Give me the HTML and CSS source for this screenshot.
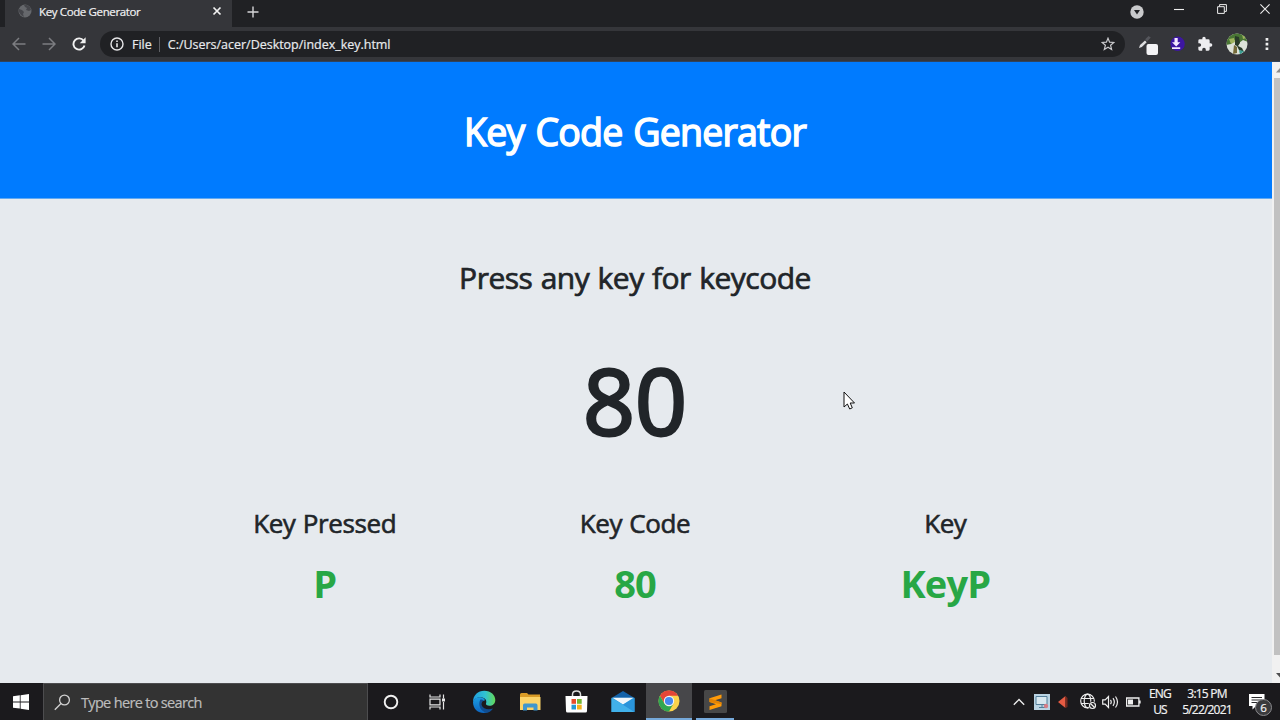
FILE: index.html
```html
<!DOCTYPE html>
<html lang="en">
<head>
    <meta charset="utf-8">
    <title>Key Code Generator</title>
    <link rel="stylesheet" href="styles.css">
</head>
<body>
    <div class="tabs">
        <div class="tab-edge"></div>
        <div class="tab">
            <svg width="14" height="14" viewBox="0 0 14 14"><circle cx="7" cy="7" r="6.5" fill="#66686c"/><path d="M1 5l3 1 2 2-1 2 1 3-3-2-2-3zM6 1l1 2 2 1-1 2 3 1 2-1-1-3-3-2z" fill="#45464b"/></svg>
            <span class="tab-title">Key Code Generator</span>
            <svg class="tab-close" width="10" height="10" viewBox="0 0 10 10"><path d="M1.5 1.5l7 7M8.5 1.5l-7 7" stroke="#f1f1f1" stroke-width="1.7"/></svg>
        </div>
        <svg class="new-tab" width="12" height="12" viewBox="0 0 12 12"><path d="M6 .5v11M.5 6h11" stroke="#d5d5d7" stroke-width="1.4"/></svg>
        <div class="window-buttons">
            <svg width="14" height="14" viewBox="0 0 14 14"><circle cx="7" cy="7" r="6.7" fill="#c9cacc"/><path d="M4 5h6L7 9.5z" fill="#202124"/></svg>
            <svg width="10" height="10" viewBox="0 0 10 10"><path d="M0 3.5h10" stroke="#eee" stroke-width="1.1"/></svg>
            <svg width="10" height="10" viewBox="0 0 10 10"><path d="M.6 2.7h6.7v6.7H.6zM2.6 2.5V.6h6.8v6.8H7.5" fill="none" stroke="#eee"/></svg>
            <svg width="10" height="10" viewBox="0 0 10 10"><path d="M.4.4l9.2 9.2M9.6.4L.4 9.6" stroke="#eee" stroke-width="1.1"/></svg>
        </div>
    </div>

    <div class="toolbar">
        <svg class="nav" width="14" height="14" viewBox="0 0 14 14"><path d="M13.5 7H1M7 1L1 7l6 6" fill="none" stroke="#7c7d81" stroke-width="1.5"/></svg>
        <svg class="nav" width="14" height="14" viewBox="0 0 14 14"><path d="M.5 7H13M7 1l6 6-6 6" fill="none" stroke="#7c7d81" stroke-width="1.5"/></svg>
        <svg class="nav" width="14" height="14" viewBox="0 0 14 14"><path d="M11.6 3.7A5.6 5.6 0 1 0 12.5 8.4" fill="none" stroke="#f1f1f1" stroke-width="1.9"/><path d="M13.6.3v6H7.8z" fill="#f1f1f1"/></svg>
        <div class="address">
            <svg width="14" height="14" viewBox="0 0 14 14"><circle cx="7" cy="7" r="6" fill="none" stroke="#e6e6e8" stroke-width="1.4"/><path d="M7 6.2v4.1M7 3.5v1.6" stroke="#e6e6e8" stroke-width="1.6"/></svg>
            <span class="scheme">File</span>
            <span class="url">C:/Users/acer/Desktop/index_key.html</span>
            <svg class="star" width="14" height="14" viewBox="0 0 14 14"><path d="M7 1.2l1.6 4 4.3.3-3.3 2.8 1 4.2L7 10.2l-3.7 2.3 1.1-4.2L1.1 5.5l4.3-.3z" fill="none" stroke="#cacacd" stroke-width="1.2"/></svg>
        </div>
        <div class="extensions">
            <svg width="22" height="22" viewBox="0 0 22 22"><path d="M2 15l1-3 5-4.500 1.700 1.700-4.800 4.900z" fill="#dedee0"/><path d="M8.200 6.300L11.500 3l2.300 1.500-3.700 4z" fill="#55565c"/><rect x="9.500" y="11" width="11.500" height="11" rx="2" fill="#f4f4f6"/></svg>
            <svg width="16" height="16" viewBox="0 0 16 16"><circle cx="8.600" cy="7.800" r="7.200" fill="#3d16a2"/><path d="M5.500 2h3.200v4.300h2.600L7.200 10.500 3 6.300h2.500zM3 11.300h8.200v1.600H3z" fill="#f5e9ff"/></svg>
            <svg width="16" height="16" viewBox="0 0 24 24"><path d="M20.500 11H19V7a2 2 0 0 0-2-2h-4V3.500a2.500 2.500 0 0 0-5 0V5H4a2 2 0 0 0-2 2v3.800h1.500a2.700 2.700 0 0 1 0 5.400H2V20a2 2 0 0 0 2 2h3.800v-1.500a2.700 2.700 0 0 1 5.400 0V22H17a2 2 0 0 0 2-2v-4h1.500a2.500 2.500 0 0 0 0-5z" fill="#eeeef1"/></svg>
            <svg width="22" height="22" viewBox="0 0 22 22"><clipPath id="face"><circle cx="11" cy="11" r="10.500"/></clipPath><g clip-path="url(#face)"><path d="M0 0h22v22H0z" fill="#dce2d8"/><path d="M0 0h22v9l-5-2-4 3-3-4-5 5-5 1z" fill="#497634"/><path d="M3 6l5-1 1 4-4 2zM16 1l4 4-3 1z" fill="#9fb45e"/><path d="M9 3l4 1 1 6-2 3 4 2 2 4-5-2-2-4-2-1z" fill="#293b29"/><path d="M8 12l3 2v6l-4 1z" fill="#756b3a"/><path d="M13 17l5 1-4 4z" fill="#3b9e94"/></g></svg>
            <svg width="4" height="14" viewBox="0 0 4 14"><path d="M.6 1h2.700v2.700H.6zM.6 5.700h2.700v2.700H.6zM.6 10.400h2.700v2.700H.6z" fill="#eee"/></svg>
        </div>
    </div>

    <div class="viewport">
        <div class="page">
            <header class="header">
                <h1>Key Code Generator</h1>
            </header>
            <main>
                <h2>Press any key for keycode</h2>
                <div class="big-code">80</div>
                <div class="results">
                    <div class="result">
                        <h3>Key Pressed</h3>
                        <p>P</p>
                    </div>
                    <div class="result">
                        <h3>Key Code</h3>
                        <p>80</p>
                    </div>
                    <div class="result">
                        <h3>Key</h3>
                        <p>KeyP</p>
                    </div>
                </div>
            </main>
        </div>
        <div class="scrollbar">
            <svg width="8" height="16" viewBox="0 0 8 16"><path d="M4 10.500l4-4.500v4.500z" fill="#8b8b8b"/></svg>
            <div class="thumb"></div>
            <svg width="8" height="16" viewBox="0 0 8 16"><path d="M4 6h4v4.500z" fill="#505050"/></svg>
        </div>
        <svg class="cursor" width="13" height="19" viewBox="0 0 13 19"><path d="M1 1v15l3.400-3 2.300 5 2.600-1.200L7.200 12h4.300z" fill="#fff" stroke="#111" stroke-width="1"/></svg>
    </div>

    <div class="taskbar">
        <div class="start">
            <svg width="16" height="16" viewBox="0 0 16 16"><path d="M0 2.300l6.800-1v6.200H0zM7.600 1.200L16 0v7.500H7.600zM0 8.400h6.800v6.200L0 13.700zM7.600 8.400H16V16l-8.400-1.200z" fill="#fff"/></svg>
        </div>
        <div class="search">
            <svg width="17" height="17" viewBox="0 0 17 17"><circle cx="10.500" cy="6" r="4.900" fill="none" stroke="#d2d2d2" stroke-width="1.300"/><path d="M7 9.500L.8 15.700" stroke="#d2d2d2" stroke-width="1.300"/></svg>
            <span>Type here to search</span>
        </div>
        <div class="apps">
            <div class="app"><svg width="16" height="16" viewBox="0 0 16 16"><circle cx="8" cy="8" r="6.300" fill="none" stroke="#f0f0f0" stroke-width="1.900"/></svg></div>
            <div class="app"><svg width="17" height="16" viewBox="0 0 17 16"><path d="M1 .5V3h10V.5M1 15.500V13h10v2.500M1 5.200h10v5.600H1zM14.500.5v4M14.500 8v7.500" fill="none" stroke="#e5e5e5" stroke-width="1.200"/><path d="M13 4.500h3v3h-3z" fill="#e5e5e5"/></svg></div>
            <div class="app">
                <svg width="24" height="24" viewBox="0 0 24 24">
                    <defs>
                        <linearGradient id="edgeTop"><stop offset="0" stop-color="#209ee0"/><stop offset=".55" stop-color="#30c3d2"/><stop offset="1" stop-color="#65d956"/></linearGradient>
                        <linearGradient id="edgeLow" x2="0" y2="1"><stop offset="0" stop-color="#1b9de2"/><stop offset="1" stop-color="#0d65c0"/></linearGradient>
                    </defs>
                    <path d="M1 12C1 5 6 .7 12.300.7 19 .7 23.300 5.200 23.300 10c0 3.700-2.600 5.800-5.800 5.800-2.500 0-4-1-3.500-2.200 1.500-4-2-6.300-5.500-6.300C5 7.300 2 9 1 12z" fill="url(#edgeTop)"/>
                    <path d="M1 12c.7-3.500 4-5 7.300-4.700 2.700.2 4.300 1.500 4.800 3-3.600.4-4.800 3.400-3.500 6.300 1.600 3.600 5.700 4.400 10.400 2.700C14 26 1 23.500 1 12z" fill="url(#edgeLow)"/>
                    <path d="M8.200 9.700c-2.500 5.500.5 12 6.800 13 2.500-.6 4.700-2.200 6-4.300-4.500 1.700-9.800.7-11.300-2.800-.8-2 0-4.200 1.800-5.300-1-.7-2.200-.9-3.300-.6z" fill="#104d91"/>
                </svg>
            </div>
            <div class="app"><svg width="21" height="18" viewBox="0 0 21 18"><path d="M0 1.500Q0 0 1.500 0H7l1.500 1.500H20v4H0z" fill="#d99b26"/><path d="M0 4h20.500v13H0z" fill="#fbd368"/><path d="M3 17.500v-5.300q0-1.600 1.600-1.600h11.300q1.600 0 1.600 1.600v5.300h-4v-3H7v3z" fill="#3f96cd"/></svg></div>
            <div class="app"><svg width="23" height="23" viewBox="0 0 23 23"><path d="M7.500 7V4.500q0-3.500 4-3.500t4 3.500V7" fill="none" stroke="#ddd" stroke-width="1.500"/><path d="M.5 6h22l-.5 15q0 1.500-1.500 1.500h-18Q1 22.500 1 21z" fill="#fff"/><path d="M6.500 9H11v4.800H6.500z" fill="#e64b2c"/><path d="M12 9h4.700v4.800H12z" fill="#73b733"/><path d="M6.500 14.700H11v4.800H6.500z" fill="#2499d6"/><path d="M12 14.700h4.700v4.800H12z" fill="#f4b21d"/></svg></div>
            <div class="app"><svg width="24" height="22" viewBox="0 0 24 22"><path d="M.5 7L12 0l11.500 7z" fill="#1362a8"/><path d="M.5 6.800h23V21H.5z" fill="#2b9de0"/><path d="M1.500 6.800h21L12 13.500z" fill="#f1f7fa"/><path d="M.5 7L17 16.500 23.500 21H.5z" fill="#41b1ea"/><path d="M23.500 7L12 13.800l11.500 7.200z" fill="#2a94da"/></svg></div>
            <div class="app active">
                <svg width="22" height="22" viewBox="0 0 22 22">
                    <circle cx="11" cy="11" r="10.500" fill="#fcd34b"/>
                    <path d="M1.900 5.750A10.500 10.500 0 0 1 20.100 5.750H11L6.450 13.600z" fill="#e44537"/>
                    <path d="M1.900 5.750A10.500 10.500 0 0 0 11 21.500l4.550-7.900L11 16.200l-4.600-2.600z" fill="#31a652"/>
                    <circle cx="11" cy="11" r="5.200" fill="#f5f5f5"/><circle cx="11" cy="11" r="4.100" fill="#4688ef"/>
                </svg>
            </div>
            <div class="app running"><svg width="23" height="23" viewBox="0 0 23 23"><rect width="23" height="23" rx="1.500" fill="#474747"/><path d="M5.500 8.200l12-3.700v3.800l-6.500 2 6.500 2.200v3.800l-12 3.700v-3.800l6.500-2-6.500-2.200z" fill="#ff9b09"/><path d="M5.500 8.200l12 4.300v1.800L5.500 12z" fill="#e38305"/></svg></div>
        </div>
        <div class="tray">
            <svg class="chevron" width="12" height="8" viewBox="0 0 12 8"><path d="M.8 6.800L6 1.500l5.200 5.300" fill="none" stroke="#eee" stroke-width="1.300"/></svg>
            <svg class="display" width="16" height="16" viewBox="0 0 16 16"><path d="M0 0h16v16H0z" fill="#b9d3e3"/><path d="M2 2.500h11v8H2zM5 13.500h6M8 10.500v3" fill="#d8e8f0" stroke="#537e99"/><circle cx="12" cy="12" r="2.200" fill="#d47d87"/></svg>
            <svg class="horn" width="10" height="14" viewBox="0 0 10 14"><path d="M0 7L7.500 1v12z" fill="#e65b43"/><path d="M7.500 1l2 2v9l-2 1z" fill="#74281f"/></svg>
            <svg class="globe" width="17" height="17" viewBox="0 0 17 17"><g fill="none" stroke="#eee" stroke-width="1.200"><circle cx="7.500" cy="8" r="6.800"/><ellipse cx="7.500" cy="8" rx="3.300" ry="6.800"/><path d="M1 5.500h13M1 10.500h13"/></g><circle cx="12.500" cy="12.500" r="4.200" fill="#1b1a1d"/><circle cx="12.500" cy="12.500" r="3" fill="none" stroke="#eee" stroke-width="1.200"/><path d="M10.500 10.500l4 4" stroke="#eee" stroke-width="1.200"/></svg>
            <svg class="sound" width="17" height="14" viewBox="0 0 17 14"><path d="M.7 4.800h2.500L6.500 1.500v11L3.200 9.200H.7zM8.500 4.800q1.500 2.200 0 4.400M11 3.200q2.700 3.800 0 7.600M13.500 1.500q4 5.500 0 11" fill="none" stroke="#eee" stroke-width="1.200"/></svg>
            <svg class="battery" width="15" height="10" viewBox="0 0 15 10"><path d="M.6 1h12.300v8H.6zM14 3.500v3" fill="none" stroke="#eee" stroke-width="1.300"/><path d="M2 2.500h5v5H2z" fill="#eee"/></svg>
            <div class="lang">ENG<br>US</div>
            <div class="clock">3:15 PM<br>5/22/2021</div>
            <div class="notices">
                <svg width="16" height="16" viewBox="0 0 16 16"><path d="M0 0h15.500v12H7l-3.500 3.500V12H0z" fill="#fff"/><path d="M2.500 3.500h10.500M2.500 6h10.500M2.500 8.500h7" stroke="#29292b" stroke-width="1.100"/></svg>
                <span class="count">6</span>
            </div>
        </div>
    </div>
</body>
</html>
```

FILE: styles.css
```css
* {
    box-sizing: border-box;
}
body {
    margin: 0;
    height: 720px;
    overflow: hidden;
    display: flex;
    flex-direction: column;
    font-family: "Open Sans", "Noto Sans", sans-serif;
    color: #212529;
}
svg {
    display: block;
    flex-shrink: 0;
}
h1, h2, h3, p {
    margin: 0;
    white-space: nowrap;
}

/* browser tabs */
.tabs {
    height: 27px;
    flex-shrink: 0;
    display: flex;
    background: #202124;
}
.tab-edge {
    width: 5px;
    background: #202124;
}
.tab {
    width: 227px;
    padding: 0 10px 5px 13px;
    display: flex;
    align-items: center;
    background: #35363a;
}
.tab-title {
    margin-left: 7px;
    font-size: 11.5px;
    letter-spacing: -0.37px;
    color: #f1f1f2;
    white-space: nowrap;
    -webkit-text-stroke: 0.2px;
}
.tab-close {
    margin-left: auto;
}
.new-tab {
    margin: 6px 0 0 15px;
}
.window-buttons {
    display: flex;
    align-items: flex-start;
    margin-left: auto;
    padding: 4px 10px 0 0;
}
.window-buttons svg + svg {
    margin-left: 33px;
}
.window-buttons svg:first-child {
    margin-top: 1px;
    margin-right: -3px;
}
.window-buttons svg:nth-child(2) {
    margin-top: 2px;
}

/* address row */
.toolbar {
    height: 35px;
    flex-shrink: 0;
    padding: 0 11px 0 12px;
    display: flex;
    align-items: center;
    background: #35363a;
    border-bottom: 1px solid #30435d;
}
.nav {
    margin-right: 16px;
}
.address {
    width: 1025px;
    height: 26px;
    margin-left: -2px;
    padding: 0 10px;
    display: flex;
    align-items: center;
    background: #202124;
    border-radius: 13px;
    color: #e8eaed;
    font-size: 12.5px;
    white-space: nowrap;
    -webkit-text-stroke: 0.2px;
}
.scheme {
    margin-left: 8px;
    padding-right: 7px;
    line-height: 15px;
    border-right: 1px solid #606166;
}
.url {
    margin-left: 8px;
    letter-spacing: -0.02px;
}
.star {
    margin-left: auto;
}
.extensions {
    flex: 1;
    display: flex;
    align-items: center;
    justify-content: space-between;
    padding-left: 12px;
}
.extensions svg:nth-child(2) {
    margin-left: -3px;
}
.extensions svg:nth-child(4) {
    margin-right: 5px;
}

/* page */
.viewport {
    position: relative;
    height: 621px;
    flex-shrink: 0;
    display: flex;
}
.page {
    flex: 1;
    background: #e6eaee;
    text-align: center;
}
.header {
    height: 137px;
    padding: 44px 2px 0 0;
    background: #007bff;
    border-bottom: 1px solid #61a9f2;
    color: #fff;
}
main {
    padding-right: 2px;
}
h1 {
    font-size: 37.5px;
    line-height: 52px;
    font-weight: 400;
    letter-spacing: -0.8px;
    word-spacing: 2px;
    -webkit-text-stroke: 1.5px;
}
h2 {
    padding-top: 58px;
    font-size: 30px;
    line-height: 42px;
    font-weight: 400;
    letter-spacing: -0.5px;
    word-spacing: 1px;
    -webkit-text-stroke: 0.7px;
}
.big-code {
    padding-top: 38px;
    font-size: 91px;
    line-height: 126px;
    -webkit-text-stroke: 2.8px;
}
.results {
    width: 931px;
    margin: 42px auto 0;
    display: flex;
}
.result {
    flex: 1;
}
h3 {
    font-size: 26px;
    line-height: 36px;
    font-weight: 400;
    letter-spacing: -0.4px;
    word-spacing: 1px;
    -webkit-text-stroke: 0.6px;
}
.result p {
    margin-top: 16px;
    font-size: 38px;
    line-height: 52px;
    font-weight: 700;
    letter-spacing: -0.9px;
    color: #28a745;
}
.scrollbar {
    width: 8px;
    display: flex;
    flex-direction: column;
    background: #f1f1f1;
}
.thumb {
    height: 577px;
    margin: 0 0 12px 2px;
    background: #c1c1c1;
}
.cursor {
    position: absolute;
    left: 843px;
    top: 329px;
}

/* taskbar */
.taskbar {
    height: 37px;
    flex-shrink: 0;
    display: flex;
    background: #1b1a1d;
    color: #f2f2f2;
}
.start {
    width: 43px;
    display: flex;
    align-items: center;
    justify-content: center;
    padding-right: 2px;
}
.search {
    width: 325px;
    display: flex;
    align-items: center;
    padding-left: 10px;
    background: #333;
    border: 1px solid #4d4d4f;
    border-bottom: 0;
    color: #bdbdbd;
    font-size: 14.5px;
    letter-spacing: -0.67px;
    -webkit-text-stroke: 0.2px;
}
.search span {
    margin-left: 10px;
}
.apps {
    display: flex;
}
.app {
    width: 46.3px;
    display: flex;
    align-items: center;
    justify-content: center;
}
.active {
    background: #47474a;
    border-bottom: 2px solid #76a9da;
}
.running {
    background: linear-gradient(#76a9da, #76a9da) center bottom / 38px 2px no-repeat;
}
.tray {
    flex: 1;
    display: flex;
    align-items: center;
    justify-content: flex-end;
    padding-right: 15px;
    font-size: 12px;
    line-height: 16px;
    text-align: center;
    white-space: nowrap;
    -webkit-text-stroke: 0.2px;
}
.display {
    margin-left: 9px;
}
.horn {
    margin-left: 8px;
}
.globe {
    margin-left: 12px;
}
.sound {
    margin-left: 5px;
}
.battery {
    margin-left: 7px;
}
.lang {
    width: 24px;
    margin-left: 7px;
    letter-spacing: -0.8px;
}
.clock {
    width: 52px;
    margin-left: 9px;
    letter-spacing: -0.8px;
}
.notices {
    position: relative;
    width: 16px;
    margin-left: 16px;
}
.count {
    position: absolute;
    left: 6px;
    top: 5px;
    width: 17px;
    height: 17px;
    border: 1px solid #8a8a8d;
    border-radius: 50%;
    background: #3a3a3d;
    font-size: 11.5px;
    line-height: 15px;
}
```
